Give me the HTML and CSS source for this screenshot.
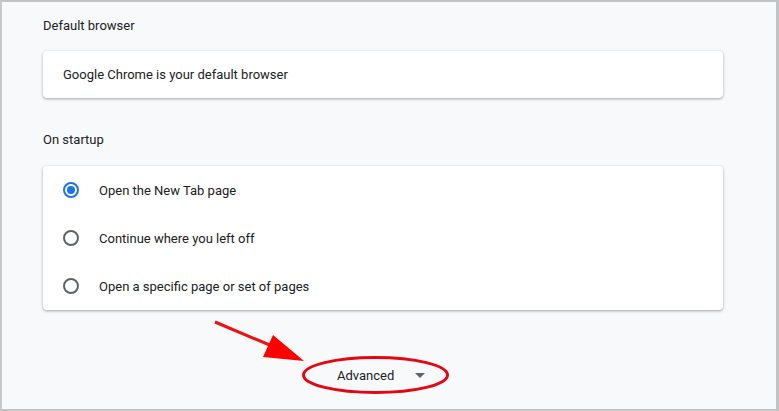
FILE: index.html
```html
<!DOCTYPE html>
<html>
<head>
<meta charset="utf-8">
<link rel="stylesheet" href="styles.css">
</head>
<body>
<div class="frame">
  <div class="content">
    <div class="section-title">Default browser</div>
    <div class="card">
      <div class="row">Google Chrome is your default browser</div>
    </div>
    <div class="section-title second">On startup</div>
    <div class="card">
      <div class="radio-row"><span class="radio checked"></span><span>Open the New Tab page</span></div>
      <div class="radio-row"><span class="radio"></span><span>Continue where you left off</span></div>
      <div class="radio-row"><span class="radio"></span><span>Open a specific page or set of pages</span></div>
    </div>
    <div class="advanced">
      <span class="adv-label">Advanced</span>
      <svg class="caret" width="10" height="5" viewBox="0 0 10 5"><path d="M0 0 L10 0 L5 5 Z" fill="#5f6368"/></svg>
    </div>
  </div>
  <svg class="annot" width="779" height="411" viewBox="0 0 779 411">
    <ellipse cx="375.5" cy="375" rx="72" ry="17.5" fill="none" stroke="#e30613" stroke-width="3"/>
    <line x1="215" y1="322" x2="272" y2="346" stroke="#ee1111" stroke-width="3"/>
    <polygon points="304,361 263,357 273,335" fill="#ff0000"/>
  </svg>
</div>
</body>
</html>
```

FILE: styles.css
```css
html, body {
  margin: 0;
  padding: 0;
}
body {
  font-family: Roboto, "Liberation Sans", Arial, sans-serif;
  color: #202124;
  font-size: 13px;
}
.frame {
  position: relative;
  width: 779px;
  height: 411px;
  box-sizing: border-box;
  border-top: 2px solid #c3c3c3;
  border-left: 2px solid #c8c8c8;
  border-right: 3px solid #c3c3c3;
  border-bottom: 2px solid #c3c3c3;
  background: #f8f9fa;
  overflow: hidden;
}
.content {
  padding: 14px 0 0 41px;
  width: 680px;
}
.section-title {
  height: 20px;
  line-height: 20px;
  font-size: 13px;
  color: #202124;
  margin-bottom: 15px;
}
.section-title.second {
  margin-top: 32px;
  margin-bottom: 17px;
}
.card {
  background: #ffffff;
  border-radius: 4px;
  box-shadow: 0 1px 2px rgba(60,64,67,0.3), 0 1px 3px 1px rgba(60,64,67,0.12);
}
.row {
  height: 47px;
  line-height: 47px;
  padding-left: 20px;
}
.radio-row {
  display: flex;
  align-items: center;
  height: 48px;
  padding-left: 20px;
}
.radio-row:first-child {
  margin-top: -1px;
}
.radio {
  width: 16px;
  height: 16px;
  box-sizing: border-box;
  border: 2px solid #5f6368;
  border-radius: 50%;
  margin-right: 20px;
  display: flex;
  align-items: center;
  justify-content: center;
  flex: none;
}
.radio.checked {
  border-color: #1a73e8;
}
.radio.checked::after {
  content: "";
  width: 8px;
  height: 8px;
  border-radius: 50%;
  background: #1a73e8;
}
.advanced {
  display: flex;
  align-items: center;
  margin-top: 55px;
  margin-left: 294px;
  height: 20px;
}
.adv-label {
  font-size: 13px;
  color: #202124;
}
.caret {
  margin-left: 21px;
}
.annot {
  position: absolute;
  left: -2px;
  top: -2px;
  pointer-events: none;
}
```
